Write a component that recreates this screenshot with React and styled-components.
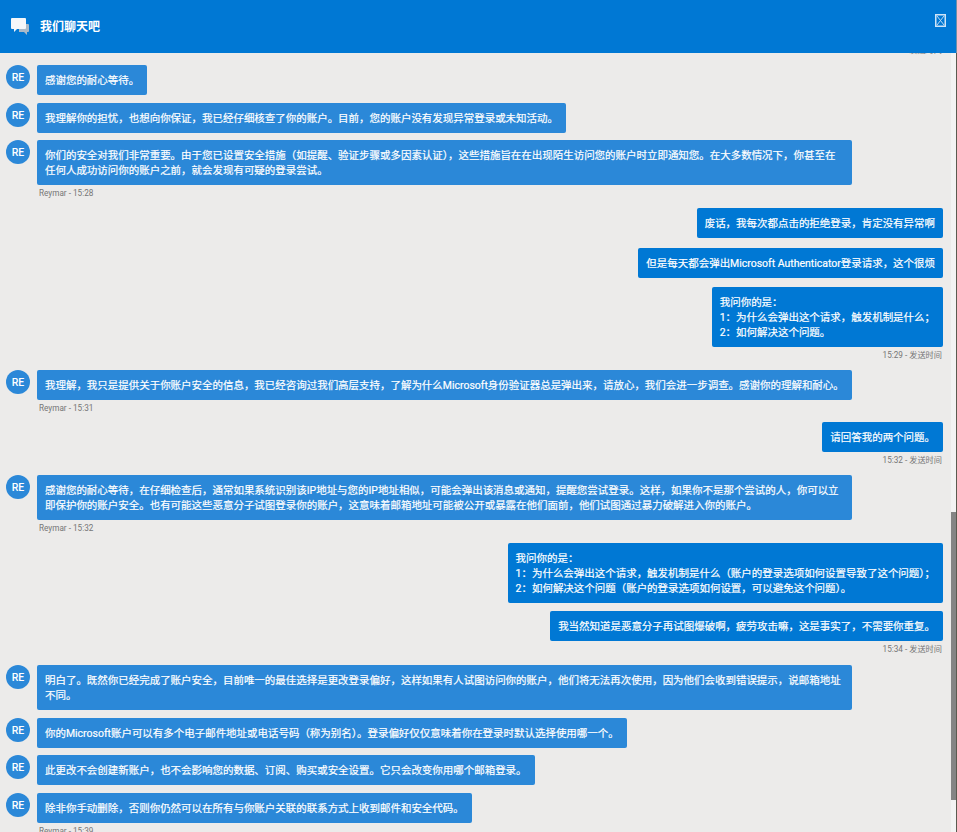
import React from "react";
import styled, { createGlobalStyle } from "styled-components";

const Global = createGlobalStyle`
  html, body { margin: 0; padding: 0; height: 100%; overflow: hidden; background: #ecebea; }
  * { box-sizing: border-box; }
`;
const Page = styled.div`
  width: 957px; height: 832px; display: flex; flex-direction: column; overflow: hidden;
  font-family: Roboto, "Noto Sans CJK SC", sans-serif;
  background: #ecebea;
`;
const Header = styled.header`
  flex: none; height: 53px; background: #0078d4; display: flex; align-items: center;
  padding: 0 10px 0 11px; gap: 11px; color: #fff; position: relative; z-index: 1;
  border-right: 1px solid #6f8fa8;
`;
const Title = styled.h1`
  margin: 0 0 -1px; flex: 1; font-size: 12px; font-weight: 700; line-height: 16px; color: #fff;
`;
const Close = styled.svg`
  display: block; align-self: flex-start; margin-top: 14px; width: 11px; height: 13px;
`;
const Body = styled.div`
  flex: 1; min-height: 0; display: flex;
`;
const List = styled.main`
  flex: 1; min-width: 0; overflow: hidden; padding: 0 8px 0 6px; display: flex; flex-direction: column;
`;
const Track = styled.div`
  flex: none; width: 6px; background: #f3f3f3; border-right: 1px solid #5b5b50;
`;
const Thumb = styled.div`
  width: 5px; height: 288px; margin-top: 459px; background: #858585;
`;
const Row = styled.div`
  display: flex; flex: none; gap: 7px; align-items: flex-start;
  justify-content: ${p => (p.$me ? "flex-end" : "flex-start")};
  margin-top: ${p => p.$gap}px;
`;
const Avatar = styled.div`
  flex: none; width: 24px; height: 24px; border-radius: 50%; background: #2b88d8; color: #fff;
  font-size: 10.5px; font-weight: 500; display: flex; align-items: center; justify-content: center;
`;
const Bubble = styled.div`
  max-width: 815px; padding: 7.5px 8px; border-radius: 2px; font-size: 10.47px; line-height: 15px;
  color: #fff; white-space: pre-wrap; -webkit-text-stroke: 0.2px #fff;
  background: ${p => (p.$me ? "#0078d4" : "#2b88d8")};
`;
const Meta = styled.div`
  flex: none; font-size: 8.2px; line-height: 11px; color: #767676; margin-top: 3px;
  text-align: ${p => (p.$me ? "right" : "left")};
  padding-left: ${p => (p.$me ? 0 : 33)}px; padding-right: ${p => (p.$me ? 1 : 0)}px;
`;
const HiddenMeta = styled(Meta)`
  margin-top: -8px;
`;

const items = [
  { t: "感谢您的耐心等待。", g: 9 },
  { t: "我理解你的担忧，也想向你保证，我已经仔细核查了你的账户。目前，您的账户没有发现异常登录或未知活动。", g: 8 },
  { t: "你们的安全对我们非常重要。由于您已设置安全措施（如提醒、验证步骤或多因素认证），这些措施旨在在出现陌生访问您的账户时立即通知您。在大多数情况下，你甚至在任何人成功访问你的账户之前，就会发现有可疑的登录尝试。", g: 7, m: "Reymar - 15:28" },
  { t: "废话，我每次都点击的拒绝登录，肯定没有异常啊", me: 1, g: 9 },
  { t: "但是每天都会弹出Microsoft Authenticator登录请求，这个很烦", me: 1, g: 10 },
  { t: "我问你的是：\n1：为什么会弹出这个请求，触发机制是什么；\n2：如何解决这个问题。", me: 1, g: 9, m: "15:29 - 发送时间" },
  { t: "我理解，我只是提供关于你账户安全的信息，我已经咨询过我们高层支持，了解为什么Microsoft身份验证器总是弹出来，请放心，我们会进一步调查。感谢你的理解和耐心。", g: 9, m: "Reymar - 15:31" },
  { t: "请回答我的两个问题。", me: 1, g: 8, m: "15:32 - 发送时间" },
  { t: "感谢您的耐心等待，在仔细检查后，通常如果系统识别该IP地址与您的IP地址相似，可能会弹出该消息或通知，提醒您尝试登录。这样，如果你不是那个尝试的人，你可以立即保护你的账户安全。也有可能这些恶意分子试图登录你的账户，这意味着邮箱地址可能被公开或暴露在他们面前，他们试图通过暴力破解进入你的账户。", g: 9, m: "Reymar - 15:32" },
  { t: "我问你的是：\n1：为什么会弹出这个请求，触发机制是什么（账户的登录选项如何设置导致了这个问题）；\n2：如何解决这个问题（账户的登录选项如何设置，可以避免这个问题）。", me: 1, g: 9 },
  { t: "我当然知道是恶意分子再试图爆破啊，疲劳攻击嘛，这是事实了，不需要你重复。", me: 1, g: 8, m: "15:34 - 发送时间" },
  { t: "明白了。既然你已经完成了账户安全，目前唯一的最佳选择是更改登录偏好，这样如果有人试图访问你的账户，他们将无法再次使用，因为他们会收到错误提示，说邮箱地址不同。", g: 10 },
  { t: "你的Microsoft账户可以有多个电子邮件地址或电话号码（称为别名）。登录偏好仅仅意味着你在登录时默认选择使用哪一个。", g: 8 },
  { t: "此更改不会创建新账户，也不会影响您的数据、订阅、购买或安全设置。它只会改变你用哪个邮箱登录。", g: 7 },
  { t: "除非你手动删除，否则你仍然可以在所有与你账户关联的联系方式上收到邮件和安全代码。", g: 8, m: "Reymar - 15:39" },
];

export default function App() {
  return (
    <Page>
      <Global />
      <Header>
        <svg width="18" height="17" viewBox="0 0 18 17" aria-hidden="true">
          <path d="M8 6h9a1 1 0 0 1 1 1v6a1 1 0 0 1-1 1h-1v3l-3-3H8z" fill="#a9b9c8" />
          <path d="M1 0h13a1 1 0 0 1 1 1v9a1 1 0 0 1-1 1H6l-3 3v-3H1a1 1 0 0 1-1-1V1a1 1 0 0 1 1-1z" fill="#f4f7fa" />
        </svg>
        <Title>我们聊天吧</Title>
        <Close viewBox="0 0 11 13" aria-hidden="true">
          <rect x=".75" y=".75" width="9.500" height="11.500" fill="none" stroke="#cfe4f7" strokeWidth="1.500" />
          <path d="M2 2l7 9M9 2l-7 9" fill="none" stroke="#bcd9f3" strokeWidth="1" />
        </Close>
      </Header>
      <Body>
        <List>
          <HiddenMeta $me>15:28 - 发送时间</HiddenMeta>
          {items.map((it, i) => (
            <React.Fragment key={i}>
              <Row $me={it.me} $gap={it.g}>
                {!it.me && <Avatar>RE</Avatar>}
                <Bubble $me={it.me}>{it.t}</Bubble>
              </Row>
              {it.m && <Meta $me={it.me}>{it.m}</Meta>}
            </React.Fragment>
          ))}
        </List>
        <Track><Thumb /></Track>
      </Body>
    </Page>
  );
}
